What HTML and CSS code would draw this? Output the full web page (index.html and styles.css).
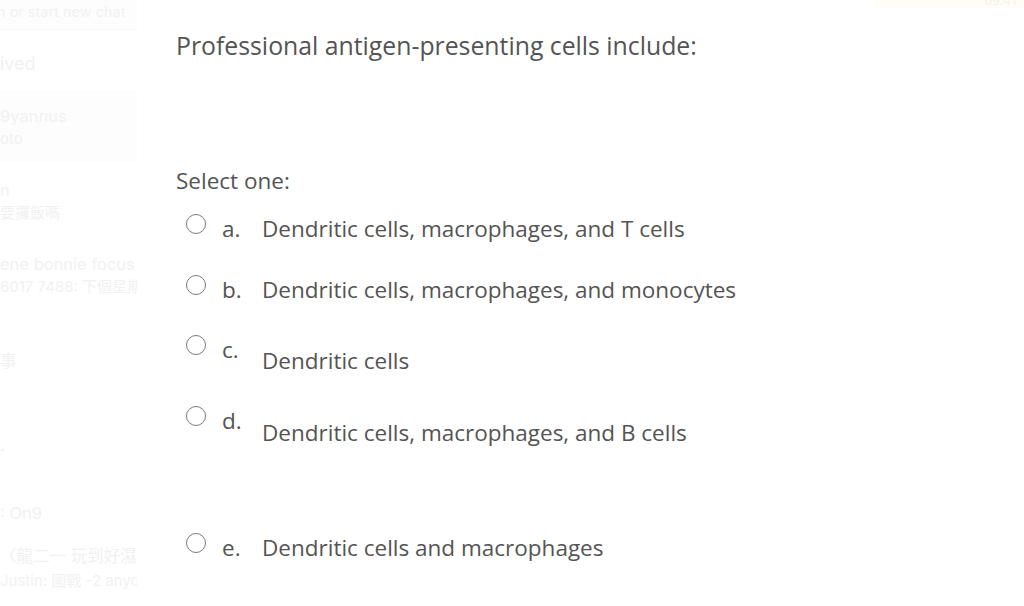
FILE: index.html
```html
<!DOCTYPE html>
<html>
<head>
<meta charset="utf-8">
<link rel="stylesheet" href="styles.css">
</head>
<body>
<div class="page">
  <aside class="sidebar">
    <div class="search">h or start new chat</div>
    <div class="archived">ived</div>
    <div class="chat c1"><div class="name">9yannus</div><div class="msg">oto</div></div>
    <div class="chat c2"><div class="name">n</div><div class="msg">要攞飯嗎</div></div>
    <div class="chat c3"><div class="name">ene bonnie focus 陈</div><div class="msg">6017 7488: 下個星期</div></div>
    <div class="chat c4"><div class="name">事</div></div>
    <div class="chat c5"><div class="name">.</div></div>
    <div class="chat c6"><div class="name">: On9</div></div>
    <div class="chat c7"><div class="name">〈龍二一 玩到好濕</div><div class="msg">Justin: 國戰 -2 anyon</div></div>
  </aside>
  <main class="main">
    <div class="topband"><span class="clock">09:41</span></div>
    <h1 class="question">Professional antigen-presenting cells include:</h1>
    <p class="prompt">Select one:</p>
    <div class="options">
      <div class="opt opt-a"><span class="radio"></span><span class="letter">a.</span><span class="text">Dendritic cells, macrophages, and T cells</span></div>
      <div class="opt opt-b"><span class="radio"></span><span class="letter">b.</span><span class="text">Dendritic cells, macrophages, and monocytes</span></div>
      <div class="opt opt-c"><span class="radio"></span><span class="letter">c.</span><span class="text">Dendritic cells</span></div>
      <div class="opt opt-d"><span class="radio"></span><span class="letter">d.</span><span class="text">Dendritic cells, macrophages, and B cells</span></div>
      <div class="opt opt-e"><span class="radio"></span><span class="letter">e.</span><span class="text">Dendritic cells and macrophages</span></div>
    </div>
  </main>
</div>
</body>
</html>
```

FILE: styles.css
```css
html, body {
  margin: 0;
  padding: 0;
  background: #ffffff;
}
body {
  width: 1024px;
  height: 606px;
  overflow: hidden;
  font-family: "Open Sans", "Noto Sans", sans-serif;
}
.page {
  display: flex;
  height: 606px;
}
.sidebar {
  width: 137px;
  flex: none;
  overflow: hidden;
  white-space: nowrap;
  font-family: "Inter", "Noto Sans CJK TC", sans-serif;
  color: #f1f1f1;
  display: flex;
  flex-direction: column;
}
.search {
  height: 29px;
  line-height: 24px;
  font-size: 14.5px;
  background: #fdfdfd;
  border-bottom: 1px solid #f8f8f8;
  text-indent: -3px;
  flex: none;
}
.archived {
  height: 60px;
  box-sizing: border-box;
  padding-top: 22px;
  line-height: 24px;
  font-size: 18px;
  flex: none;
}
.chat {
  flex: none;
  box-sizing: border-box;
}
.chat .name { line-height: 24px; font-size: 16.5px; }
.chat .msg { line-height: 22px; font-size: 15px; }
.c1 { height: 72px; padding-top: 14px; background: #fdfdfd; }
.c2 { height: 74px; padding-top: 16px; }
.c3 { height: 100px; padding-top: 16px; }
.c4 { height: 70px; padding-top: 13px; }
.c5 { height: 80px; padding-top: 27px; }
.c5 .name { color: #e6eef6; }
.c6 { height: 30px; padding-top: 15px; }
.c7 { height: 90px; padding-top: 28px; }
.c7 .msg { line-height: 26px; }
.main {
  flex: 1;
  padding-left: 39px;
  position: relative;
  color: #545454;
}
.topband {
  position: absolute;
  top: 0;
  right: 0;
  width: 150px;
  height: 8px;
  background: #fffdf8;
  overflow: hidden;
}
.clock {
  position: absolute;
  right: 6px;
  top: -9px;
  font-size: 13px;
  color: #f5f1e6;
}
.question {
  margin: 28px 0 0 0;
  font-size: 24.8px;
  font-weight: 400;
  line-height: 34px;
}
.prompt {
  margin: 104px 0 0 0;
  font-size: 22.5px;
  line-height: 30px;
}
.options {
  display: flex;
  flex-direction: column;
}
.opt {
  display: flex;
  align-items: flex-start;
  font-size: 22.5px;
  line-height: 30px;
}
.radio {
  width: 20px;
  height: 20px;
  border: 1.5px solid #7a7a7a;
  border-radius: 50%;
  box-sizing: border-box;
  margin: 0 0 0 10px;
  flex: none;
}
.letter {
  width: 56px;
  padding-left: 16px;
  box-sizing: border-box;
  flex: none;
}
.opt-a { margin-top: 18px; }
.opt-b { margin-top: 31px; }
.opt-c { margin-top: 30px; }
.opt-c .text { padding-top: 11px; }
.opt-d { margin-top: 30px; }
.opt-d .text { padding-top: 12px; }
.opt-e { margin-top: 85px; }
```
